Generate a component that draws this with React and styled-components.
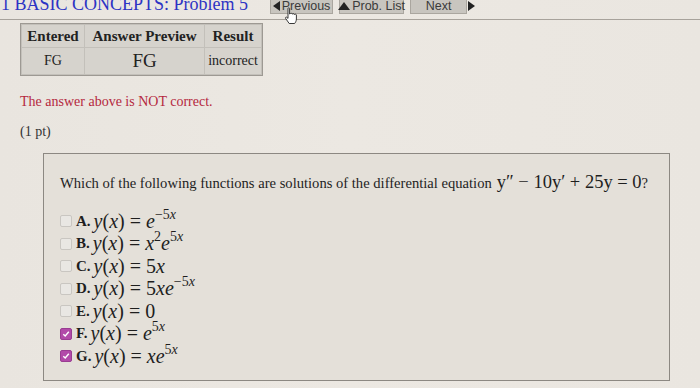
import styled, { createGlobalStyle } from "styled-components";

const Global = createGlobalStyle`
  html, body {
    margin: 0;
    padding: 0;
    background: #ebe7e1;
    font-family: "Liberation Serif", "Times New Roman", serif;
    color: #2a2a2a;
  }
`;

const Page = styled.div`
  width: 700px;
  height: 388px;
  overflow: hidden;
  position: relative;
  background: linear-gradient(90deg, #e9e5df 0%, #ece8e2 50%, #eae6e0 100%);
`;

const Header = styled.div`
  display: flex;
  align-items: flex-start;
  height: 19px;
  overflow: hidden;
  border-bottom: 1px solid #a7a29b;
`;

const Title = styled.h1`
  margin: -8px 0 0 1px;
  font-size: 18px;
  font-weight: normal;
  line-height: 24px;
  color: #2d34c4;
  white-space: nowrap;
`;

const Nav = styled.div`
  display: flex;
  gap: 6px;
  margin-left: 22px;
  margin-top: -3px;
`;

const NavButton = styled.div`
  display: flex;
  align-items: center;
  justify-content: center;
  gap: 2px;
  width: ${(p) => p.w}px;
  height: 15px;
  background: #c8c5bf;
  border: 1px solid #aaa69f;
  font-family: "Liberation Sans", Arial, sans-serif;
  font-size: 12.5px;
  color: #3a3a3a;
  white-space: nowrap;
  position: relative;
`;

const Tri = styled.span`
  width: 0;
  height: 0;
  border-style: solid;
  ${(p) =>
    p.dir === "left"
      ? "border-width: 5px 7px 5px 0; border-color: transparent #222 transparent transparent;"
      : p.dir === "right"
      ? "border-width: 5px 0 5px 7px; border-color: transparent transparent transparent #222; position: absolute; right: -9px;"
      : "border-width: 0 6px 8px 6px; border-color: transparent transparent #222 transparent;"}
`;

const Cursor = styled.svg`
  position: absolute;
  left: 283px;
  top: 7px;
`;

const Content = styled.div`
  padding: 3px 0 0 20px;
`;

const Table = styled.table`
  border-collapse: separate;
  border-spacing: 1px;
  background: #c3c0ba;
  border: 1px solid #9d9993;
  width: 243px;
`;

const Th = styled.th`
  background: #d6d3cd;
  font-size: 15px;
  font-weight: bold;
  height: 22px;
  padding: 0 3px;
  color: #222;
  text-align: center;
`;

const Td = styled.td`
  background: #d6d3cd;
  height: 24px;
  text-align: center;
  font-size: ${(p) => p.size || 14}px;
  color: #222;
`;

const Wrong = styled.p`
  margin: 18px 0 0;
  font-size: 14px;
  color: #b5283e;
`;

const Points = styled.p`
  margin: 14px 0 0;
  font-size: 14px;
  color: #333;
`;

const QuestionBox = styled.div`
  margin: 13px 0 0 23px;
  width: 627px;
  height: 228px;
  border: 1px solid #8c8882;
  background: #e4e0d9;
  padding: 18px 16px 0;
  box-sizing: border-box;
`;

const Question = styled.div`
  display: flex;
  align-items: baseline;
  font-size: 14.6px;
  color: #1e1e1e;
  white-space: nowrap;
`;

const Eq = styled.span`
  font-size: 18.5px;
  margin-left: 5px;
`;

const Choices = styled.ul`
  list-style: none;
  margin: 17px 0 0;
  padding: 0;
  display: flex;
  flex-direction: column;
`;

const Choice = styled.li`
  display: flex;
  align-items: center;
  height: 22.5px;
  white-space: nowrap;
`;

const Box = styled.span`
  width: 12px;
  height: 12px;
  border-radius: 2px;
  margin-right: 4px;
  box-sizing: border-box;
  display: flex;
  align-items: center;
  justify-content: center;
  background: ${(p) => (p.checked ? "#b24aa9" : "#e9e7e3")};
  border: 1px solid ${(p) => (p.checked ? "#9a3d92" : "#c9c6c1")};
`;

const Letter = styled.b`
  font-size: 15px;
  margin-right: 3px;
  color: #1e1e1e;
`;

const Math = styled.span`
  font-size: 20px;
  color: #1e1e1e;
`;

const I = styled.i``;

const Sup = styled.sup`
  font-size: 14px;
  vertical-align: 9px;
  line-height: 0;
`;

const Fn = () => (
  <>
    <I>y</I>(<I>x</I>) ={" "}
  </>
);

const choices = [
  { l: "A.", m: <><I>e</I><Sup>−5<I>x</I></Sup></> },
  { l: "B.", m: <><I>x</I><Sup>2</Sup><I>e</I><Sup>5<I>x</I></Sup></> },
  { l: "C.", m: <>5<I>x</I></> },
  { l: "D.", m: <>5<I>x</I><I>e</I><Sup>−5<I>x</I></Sup></> },
  { l: "E.", m: <>0</> },
  { l: "F.", m: <><I>e</I><Sup>5<I>x</I></Sup></>, c: true },
  { l: "G.", m: <><I>x</I><I>e</I><Sup>5<I>x</I></Sup></>, c: true },
];

const Check = () => (
  <svg width="8" height="8" viewBox="0 0 8 8">
    <path d="M1.3 4.2 L3.2 6 L6.8 1.8" stroke="#fff" strokeWidth="1.4" fill="none" />
  </svg>
);

export default function App() {
  return (
    <Page>
      <Global />
      <Header>
        <Title>1 BASIC CONCEPTS: Problem 5</Title>
        <Nav>
          <NavButton w={61}>
            <Tri dir="left" />
            Previous
          </NavButton>
          <NavButton w={63}>
            <Tri dir="up" />
            Prob. List
          </NavButton>
          <NavButton w={55}>
            Next
            <Tri dir="right" />
          </NavButton>
        </Nav>
      </Header>
      <Cursor width="16" height="18" viewBox="0 0 16 18">
        <path
          d="M5 1.5 C5 0.6 6.6 0.6 6.6 1.5 L6.6 7 L7.4 6.6 C7.8 6 9 6.2 9 7 L9.6 6.9 C10 6.4 11.2 6.6 11.2 7.4 L11.8 7.4 C12.3 7 13.4 7.3 13.4 8 L13.4 12 C13.4 14 12.4 15.5 11.6 16.5 L6.2 16.5 C5.4 15.2 3.6 13 2.6 11.4 C2.1 10.6 3 9.7 3.8 10.3 L5 11.4 Z"
          fill="#fff"
          stroke="#222"
          strokeWidth="0.9"
        />
      </Cursor>
      <Content>
        <Table>
          <thead>
            <tr>
              <Th>Entered</Th>
              <Th>Answer Preview</Th>
              <Th>Result</Th>
            </tr>
          </thead>
          <tbody>
            <tr>
              <Td>FG</Td>
              <Td size={19}>FG</Td>
              <Td>incorrect</Td>
            </tr>
          </tbody>
        </Table>
        <Wrong>The answer above is NOT correct.</Wrong>
        <Points>(1 pt)</Points>
        <QuestionBox>
          <Question>
            Which of the following functions are solutions of the differential equation
            <Eq>y″ − 10y′ + 25y = 0</Eq>?
          </Question>
          <Choices>
            {choices.map((c) => (
              <Choice key={c.l}>
                <Box checked={c.c}>{c.c && <Check />}</Box>
                <Letter>{c.l}</Letter>
                <Math>
                  <Fn />
                  {c.m}
                </Math>
              </Choice>
            ))}
          </Choices>
        </QuestionBox>
      </Content>
    </Page>
  );
}
